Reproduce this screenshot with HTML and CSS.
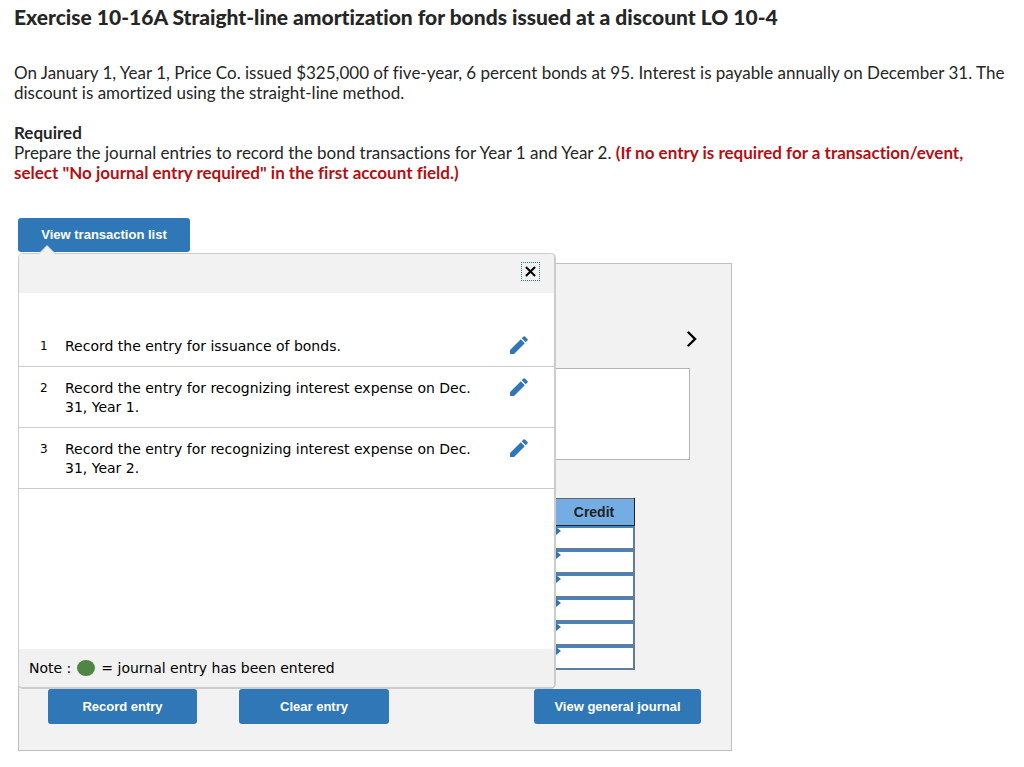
FILE: index.html
```html
<!DOCTYPE html>
<html lang="en">
<head>
<meta charset="utf-8">
<title>Exercise 10-16A</title>
<link rel="stylesheet" href="styles.css">
</head>
<body>
<svg class="defs" aria-hidden="true">
  <symbol id="pencil" viewBox="0 0 18 18">
    <path d="M0 14 L10.8 3.2 L14.8 7.2 L4 18 H0 Z M11.7 2.3 L13.5 .5 Q14.2 -.2 15 .5 L17.5 3 Q18.2 3.8 17.5 4.5 L15.7 6.3 Z"/>
  </symbol>
</svg>
<main class="page">
  <h1 class="title">Exercise 10-16A Straight-line amortization for bonds issued at a discount LO 10-4</h1>
  <p class="intro">On January 1, Year 1, Price Co. issued $325,000 of five-year, 6 percent bonds at 95. Interest is payable annually on December 31. The discount is amortized using the straight-line method.</p>
  <h2 class="required">Required</h2>
  <p class="task">Prepare the journal entries to record the bond transactions for Year 1 and Year 2. <strong class="hint">(If no entry is required for a transaction/event, select "No journal entry required" in the first account field.)</strong></p>

  <section class="work">
    <button class="btn list-btn" type="button">View transaction list</button>

    <div class="popover" role="dialog" aria-label="Transaction list">
      <svg class="pointer" viewBox="0 0 18 10" aria-hidden="true"><path d="M0 10 L9 1 L18 10" /></svg>
      <header class="pop-head">
        <button class="close" type="button" aria-label="Close"><svg viewBox="0 0 12 12"><path d="M1 1 L11 11 M11 1 L1 11"/></svg></button>
      </header>
      <ol class="entries">
        <li class="entry"><span class="num">1</span><span class="text">Record the entry for issuance of bonds.</span><button class="edit" type="button" aria-label="Edit entry 1"><svg><use href="#pencil"/></svg></button></li>
        <li class="entry"><span class="num">2</span><span class="text">Record the entry for recognizing interest expense on Dec. 31, Year 1.</span><button class="edit" type="button" aria-label="Edit entry 2"><svg><use href="#pencil"/></svg></button></li>
        <li class="entry"><span class="num">3</span><span class="text">Record the entry for recognizing interest expense on Dec. 31, Year 2.</span><button class="edit" type="button" aria-label="Edit entry 3"><svg><use href="#pencil"/></svg></button></li>
      </ol>
      <footer class="note">Note : <span class="dot"></span> = journal entry has been entered</footer>
    </div>

    <div class="panel">
      <div class="nav"><button class="next" type="button" aria-label="Next entry"><svg viewBox="0 0 10 16"><path d="M1.5 1.5 L8 8 L1.5 14.5"/></svg></button></div>
      <textarea class="memo" aria-label="Transaction description" readonly></textarea>
      <table class="journal">
        <thead><tr><th class="wide"></th><th>Credit</th></tr></thead>
        <tbody>
          <tr><td></td><td><input class="amount" aria-label="Credit 1"></td></tr>
          <tr><td></td><td><input class="amount" aria-label="Credit 2"></td></tr>
          <tr><td></td><td><input class="amount" aria-label="Credit 3"></td></tr>
          <tr><td></td><td><input class="amount" aria-label="Credit 4"></td></tr>
          <tr><td></td><td><input class="amount" aria-label="Credit 5"></td></tr>
          <tr><td></td><td><input class="amount" aria-label="Credit 6"></td></tr>
        </tbody>
      </table>
      <div class="actions">
        <button class="btn record" type="button">Record entry</button>
        <button class="btn clear" type="button">Clear entry</button>
        <button class="btn general" type="button">View general journal</button>
      </div>
    </div>
  </section>
</main>
</body>
</html>
```
FILE: styles.css
```css
* { box-sizing: border-box; }
body { margin: 0; background: #fff; color: #262626; font: 17px/20px Lato, sans-serif; font-variant-ligatures: none; }
.defs { position: absolute; width: 0; height: 0; }
.page { padding: 7px 10px 16px 14px; }
.title { margin: 0 0 36px; font-size: 21px; line-height: 20px; font-weight: 900; }
.intro { margin: 0 0 20px; }
.required { margin: 0; font-size: 17px; line-height: 20px; }
.task { margin: 0; padding-right: 8px; }
.hint { color: #b50f14; }

.work { position: relative; max-width: 718px; margin-top: 35px; padding-left: 4px; }
.btn { height: 34px; padding: 0; border: 0; border-radius: 3px; background: #3077b7; color: #fff; font: bold 13px/16px "Liberation Sans", Arial, sans-serif; }
.list-btn { display: block; width: 172px; }

.panel { margin-top: 11px; padding: 64px 41px 26px 29px; border: 1px solid #bfbfbf; background: #f2f2f2; }
.nav { display: flex; justify-content: flex-end; height: 40px; margin-right: -9px; }
.next { width: 12px; height: 22px; padding: 0; border: 0; background: none; }
.next svg { display: block; width: 10px; height: 16px; }
.next path { fill: none; stroke: #000; stroke-width: 2.4; stroke-linecap: round; }
.memo { display: block; width: 100%; height: 92px; border: 1px solid #b5b5b5; background: #fff; resize: none; }

.journal { width: 587px; margin-top: 38px; border-collapse: collapse; table-layout: fixed; border: 1px solid #777; }
.journal th { height: 27px; padding: 0; border: 1px solid #222; border-top-color: #666; background: #74ade3; color: #222; font: bold 14px/16px "Liberation Sans", Arial, sans-serif; }
.journal .wide { width: 505px; }
.journal td { height: 24px; padding: 0; border: 1px solid #777; background: #fff; }
.amount { display: block; width: 100%; height: 23px; padding: 0; border: 1px solid #4684bf; border-top-width: 2px; border-radius: 0; background: #fff; }
.journal td:last-child { position: relative; }
.journal td:last-child::before { content: ""; position: absolute; left: 2px; top: 1px; border: 4px solid transparent; border-left: 5px solid #3077b7; border-right: 0; }

.actions { display: flex; margin-top: 19px; margin-right: -11px; }
.actions .btn { height: 35px; }
.record { width: 149px; }
.clear { width: 150px; margin-left: 42px; }
.general { width: 167px; margin-left: auto; }

.popover { position: absolute; left: 4px; top: 35px; display: flex; flex-direction: column; width: 538px; height: 436px; border: 2px solid #ccc; border-width: 1px 2px 2px 1px; border-radius: 5px; background: #fff; color: #000; font: 14px/19px "DejaVu Sans", Verdana, sans-serif; z-index: 2; }
.pointer { position: absolute; left: 19px; top: -10px; width: 18px; height: 11px; }
.pointer path { fill: #f2f2f2; stroke: #ccc; stroke-width: 1; }
.pop-head { display: flex; justify-content: flex-end; height: 39px; padding: 8px 14px; border-radius: 4px 4px 0 0; background: #f2f2f2; }
.close { display: flex; align-items: center; justify-content: center; width: 19px; height: 19px; padding: 0; border: 1px dotted #1a73c8; background: none; }
.close svg { width: 11px; height: 11px; }
.close path { stroke: #000; stroke-width: 2.2; }
.entries { flex: 1; margin: 0; padding: 32px 0 0; list-style: none; }
.entry { display: flex; align-items: flex-start; padding: 12px 26px 10px 21px; border-bottom: 1px solid #ccc; }
.num { width: 25px; font-size: 12px; }
.text { width: 420px; }
.edit { width: 18px; height: 18px; margin: -1px 0 0 auto; padding: 0; border: 0; background: none; }
.edit svg { display: block; width: 18px; height: 18px; fill: #3077b7; }
.note { display: flex; align-items: center; gap: 6px; height: 38px; padding-left: 10px; border-radius: 0 0 4px 4px; background: #f1f1f1; }
.dot { width: 18px; height: 16px; border-radius: 50%; background: #4f8644; }
```
